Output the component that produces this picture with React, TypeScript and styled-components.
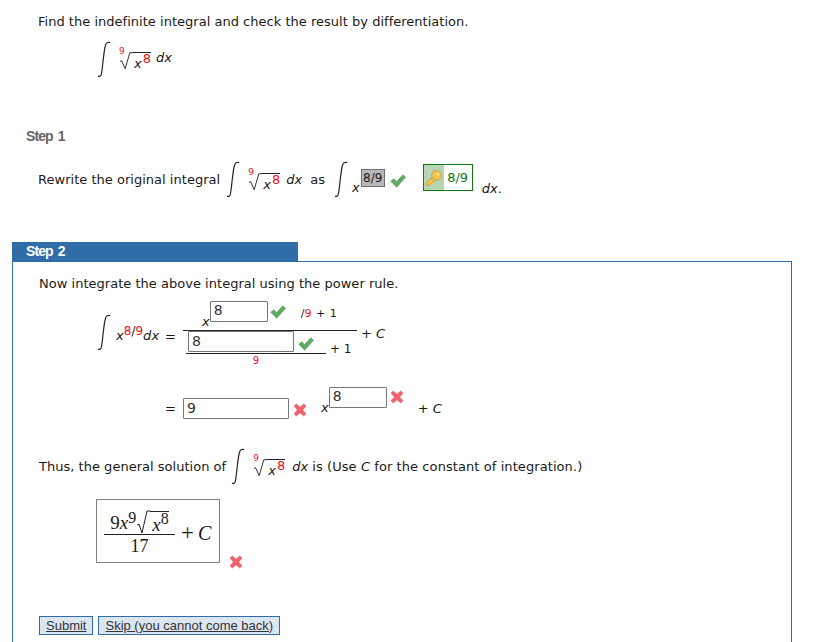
import styled, { createGlobalStyle } from 'styled-components';

const GlobalStyle = createGlobalStyle`
  html, body {
    margin: 0;
    padding: 0;
    background: #fff;
    overflow: hidden;
  }
  body {
    font-family: "DejaVu Sans", Verdana, sans-serif;
    font-size: 13px;
    letter-spacing: 0.02px;
    color: #1a1a1a;
  }
`;

const Page = styled.div`
  width: 837px;
  height: 642px;
  overflow: hidden;
  padding-top: 14px;
  box-sizing: border-box;
`;

const Question = styled.div`
  padding-left: 38px;
  height: 114px;
`;

const TextLine = styled.div`
  line-height: 16px;
  white-space: nowrap;
`;

const MathRow = styled.div<{ $indent?: number; $top?: number; $height?: number }>`
  display: flex;
  align-items: center;
  white-space: nowrap;
  margin-left: ${p => p.$indent ?? 0}px;
  margin-top: ${p => p.$top ?? 0}px;
  height: ${p => p.$height ?? 40}px;
`;

const Var = styled.i`
  font-style: italic;
`;

const Red = styled.span`
  color: #f01020;
`;

const Sup = styled.span`
  font-size: 12px;
  position: relative;
  top: -5px;
`;

const IntegralSvg = styled.svg`
  flex: none;
  width: 16px;
  height: 39px;
`;

function Integral() {
  return (
    <IntegralSvg viewBox="0 0 16 38">
      <path
        d="M1 35.500c1.500 1 2.600.4 3.300-1.600C5.600 29 6.500 12 8.300 5.500 9 2.600 10.400 1.200 13.200 2"
        fill="none"
        stroke="#222"
        strokeWidth="1.2"
      />
    </IntegralSvg>
  );
}

const RadicalWrap = styled.span`
  display: inline-flex;
  align-items: flex-end;
  position: relative;
  height: 22px;
  margin-left: 6px;
`;

const RootIndex = styled.span`
  position: absolute;
  left: 0;
  top: -2px;
  font-size: 9px;
  line-height: 10px;
  color: #f01020;
`;

const RootSvg = styled.svg`
  width: 14px;
  height: 21px;
  flex: none;
`;

const Radicand = styled.span`
  border-top: 1px solid #222;
  height: 17px;
  line-height: 21px;
  padding: 0 0 0 1px;
`;

const SmallSup = styled.span`
  color: #f01020;
  position: relative;
  top: -5px;
  margin-left: 1px;
`;

function Radical() {
  return (
    <RadicalWrap>
      <RootIndex>9</RootIndex>
      <RootSvg viewBox="0 0 14 21">
        <path d="M1 12.500l1.600-.8 3.600 8 4.600-16h3.200" fill="none" stroke="#333" strokeWidth="1" />
      </RootSvg>
      <Radicand>
        <Var>x</Var>
        <SmallSup>8</SmallSup>
      </Radicand>
    </RadicalWrap>
  );
}

const Dx = styled.span<{ $left?: number; $raise?: number }>`
  margin-left: ${p => p.$left ?? 6}px;
  position: relative;
  top: ${p => -(p.$raise ?? 0)}px;
`;

const StepLabel = styled.div`
  font-family: "Liberation Sans", Arial, sans-serif;
  font-weight: bold;
  font-size: 14px;
  line-height: 16px;
  color: #666;
  padding-left: 26px;
  letter-spacing: -0.9px;
  word-spacing: 2px;
`;

const Step1Body = styled.div`
  height: 84px;
  padding-left: 38px;
`;

const Word = styled.span<{ $left?: number; $right?: number }>`
  margin-left: ${p => p.$left ?? 0}px;
  margin-right: ${p => p.$right ?? 0}px;
`;

const WideWord = styled(Word)`
  letter-spacing: 0.08px;
`;

const BaseX = styled.i<{ $drop?: number; $left?: number }>`
  font-style: italic;
  position: relative;
  top: ${p => p.$drop ?? 0}px;
  margin-left: ${p => p.$left ?? 0}px;
`;

const GreyAnswer = styled.span`
  display: inline-block;
  box-sizing: border-box;
  width: 24px;
  height: 18px;
  line-height: 16px;
  background: #b8b8b8;
  border: 1px solid #6f6f6f;
  font-size: 12px;
  text-align: center;
  position: relative;
  top: -2px;
  margin-left: 1px;
`;

const KeyBox = styled.span`
  display: inline-flex;
  box-sizing: border-box;
  width: 50px;
  height: 27px;
  border: 1px solid #117711;
  margin-left: 17px;
  position: relative;
  top: -2px;
`;

const KeyCell = styled.span`
  width: 20px;
  background: #b6d5b4;
  display: flex;
  align-items: center;
  justify-content: center;
`;

const KeyValue = styled.span`
  flex: 1;
  text-align: center;
  line-height: 25px;
  color: #117711;
`;

const DxEnd = styled.span`
  position: relative;
  top: 9px;
  margin-left: 9px;
`;

const Tick = styled.svg<{ $left?: number; $top?: number }>`
  flex: none;
  width: 16px;
  height: 14px;
  margin-left: ${p => p.$left ?? 5}px;
  position: relative;
  top: ${p => p.$top ?? 0}px;
`;

function Check({ left, top }: { left?: number; top?: number }) {
  return (
    <Tick viewBox="0 0 16 14" $left={left} $top={top}>
      <path d="M.8 7.200l3-2.400 2.800 2.700L12.800.8l2.800 2.400-8.900 10z" fill="#62ab62" stroke="#4f9a50" strokeWidth=".6" />
    </Tick>
  );
}

function Cross({ left, top }: { left?: number; top?: number }) {
  return (
    <Tick viewBox="0 0 16 14" $left={left} $top={top}>
      <path
        d="M2 3.200L4.300 1l3.700 3.200L11.700 1 14 3.200 10.600 7l3.400 3.800-2.300 2.200L8 9.800 4.300 13 2 10.800 5.400 7z"
        fill="#f2606c"
        stroke="#e4505e"
        strokeWidth=".5"
      />
    </Tick>
  );
}

const StepHeader = styled.div`
  margin-left: 12px;
  width: 286px;
  height: 19px;
  line-height: 19px;
  box-sizing: border-box;
  padding-left: 14px;
  background: #2f6ca8;
  color: #fff;
  font-family: "Liberation Sans", Arial, sans-serif;
  font-weight: bold;
  font-size: 14px;
  letter-spacing: -0.9px;
  word-spacing: 2px;
`;

const Panel = styled.div`
  margin-left: 12px;
  width: 780px;
  height: 400px;
  box-sizing: border-box;
  border: 1px solid #2f6ca8;
  padding: 14px 0 0 26px;
`;

const Box = styled.input<{ $w: number }>`
  flex: none;
  box-sizing: border-box;
  width: ${p => p.$w}px;
  height: 21px;
  border: 1px solid #767676;
  border-radius: 1px;
  padding: 0 0 2px 3px;
  margin: 0;
  font-family: "DejaVu Sans", Verdana, sans-serif;
  font-size: 14px;
  color: #333;
  background: #fff;
  outline: none;
`;

const FracRow = styled.div`
  display: flex;
  align-items: center;
  margin: 4px 0 0 58px;
  height: 68px;
`;

const IntegralExpr = styled.div`
  display: flex;
  align-items: center;
  width: 68px;
  margin-top: 4px;
`;

const RaisedText = styled.span`
  margin-left: 3px;
  position: relative;
  top: 3px;
  white-space: nowrap;
`;

const EqualSign = styled.span<{ $drop?: number }>`
  margin-right: 7px;
  position: relative;
  top: ${p => p.$drop ?? 0}px;
`;

const BigFrac = styled.div`
  width: 174px;
  flex: none;
  display: flex;
  flex-direction: column;
  margin-top: 8px;
`;

const Numerator = styled.div`
  display: flex;
  align-items: flex-start;
  height: 29px;
  padding-left: 19px;
  border-bottom: 1.5px solid #222;
  box-sizing: content-box;
`;

const NumeratorTail = styled.span`
  font-size: 11px;
  margin: 6px 0 0 15px;
  word-spacing: 1px;
`;

const InnerFrac = styled.div`
  display: flex;
  align-items: flex-end;
`;

const InnerBody = styled.div`
  width: 140px;
  margin-left: 3px;
`;

const InnerTop = styled.div`
  display: flex;
  align-items: center;
  height: 22px;
  padding-left: 2px;
  border-bottom: 1.5px solid #222;
`;

const InnerBottom = styled.div`
  text-align: center;
  color: #f01020;
  font-size: 10px;
  line-height: 14px;
`;

const PlusOne = styled.span`
  font-size: 12px;
  margin: 0 0 12px 4px;
  white-space: nowrap;
`;

const PlusC = styled.span`
  margin-left: 4px;
  margin-top: 6px;
  white-space: nowrap;
`;

const ResultRow = styled.div`
  display: flex;
  align-items: center;
  margin: 34px 0 0 126px;
  height: 21px;
`;

const RaisedBase = styled.div`
  display: flex;
  margin-left: 13px;
  position: relative;
  top: -8px;
`;

const BaseBelow = styled.i`
  font-style: italic;
  margin-top: 13px;
`;

const TailC = styled.span`
  margin-left: 13px;
  white-space: nowrap;
`;

const ThusRow = styled(MathRow)`
  margin-top: 27px;
`;

const AnswerRow = styled.div`
  display: flex;
  margin: 13px 0 0 57px;
`;

const AnswerBox = styled.div`
  box-sizing: border-box;
  width: 124px;
  height: 64px;
  border: 1px solid #7f7f7f;
  display: flex;
  align-items: center;
  padding-left: 7px;
  font-family: "Liberation Serif", "Times New Roman", serif;
  font-size: 19px;
  letter-spacing: 0;
`;

const TypesetFrac = styled.div`
  width: 71px;
  text-align: center;
`;

const TypesetTop = styled.div`
  display: flex;
  justify-content: center;
  align-items: flex-end;
  height: 28px;
  border-bottom: 1px solid #222;
`;

const TypesetSup = styled.span`
  font-size: 16px;
  position: relative;
  top: -7px;
`;

const TypesetRoot = styled.span`
  display: inline-flex;
  align-items: flex-end;
`;

const TypesetRootSvg = styled.svg`
  width: 14px;
  height: 24px;
  flex: none;
`;

const TypesetRadicand = styled.span`
  border-top: 1px solid #222;
  height: 22px;
  line-height: 26px;
  padding-left: 2px;
`;

const TypesetBottom = styled.div`
  line-height: 22px;
  font-size: 18px;
`;

const PlusConstant = styled.span`
  margin: 3px 0 0 6px;
  font-size: 23px;
  line-height: 24px;
  white-space: nowrap;
`;

const ConstantName = styled.i`
  font-size: 20px;
  margin-left: 4px;
`;

const ActionRow = styled.div`
  display: flex;
  gap: 5px;
  margin-top: 53px;
`;

const ActionButton = styled.button`
  box-sizing: border-box;
  height: 19px;
  padding: 0 6px;
  border: 1px solid #2f6ca8;
  background: #dce6f1;
  color: #333;
  font-family: "Liberation Sans", Arial, sans-serif;
  font-size: 13px;
  line-height: 16px;
  text-decoration: underline;
`;

export default function App() {
  return (
    <>
      <GlobalStyle />
      <Page>
        <Question>
          <TextLine>Find the indefinite integral and check the result by differentiation.</TextLine>
          <MathRow $indent={59} $top={9}>
            <Integral />
            <Radical />
            <Dx $left={5} $raise={2}>
              <Var>dx</Var>
            </Dx>
          </MathRow>
        </Question>
        <StepLabel>Step 1</StepLabel>
        <Step1Body>
          <MathRow $top={14} $height={43}>
            <Word $right={6}>Rewrite the original integral</Word>
            <Integral />
            <Radical />
            <Dx>
              <Var>dx</Var>
            </Dx>
            <Word $left={8} $right={9}>as</Word>
            <Integral />
            <BaseX $drop={8} $left={2}>x</BaseX>
            <GreyAnswer>8/9</GreyAnswer>
            <Check left={5} top={1} />
            <KeyBox>
              <KeyCell>
                <svg width="18" height="18" viewBox="0 0 18 18">
                  <path d="M9 9L3 15" stroke="#c9952f" strokeWidth="4.200" strokeLinecap="round" />
                  <path d="M9 9L3 15M6 12l2 2" stroke="#f3c552" strokeWidth="2.800" strokeLinecap="round" />
                  <circle cx="11.500" cy="6.500" r="4.800" fill="#f3c552" stroke="#c9952f" strokeWidth=".8" />
                  <circle cx="12.800" cy="5.200" r="1.100" fill="#fff3c0" />
                </svg>
              </KeyCell>
              <KeyValue>8/9</KeyValue>
            </KeyBox>
            <DxEnd>
              <Var>dx</Var>.
            </DxEnd>
          </MathRow>
        </Step1Body>
        <StepHeader>Step 2</StepHeader>
        <Panel>
          <TextLine>Now integrate the above integral using the power rule.</TextLine>
          <FracRow>
            <IntegralExpr>
              <Integral />
              <RaisedText>
                <Var>x</Var>
                <Sup>
                  <Red>8</Red>/<Red>9</Red>
                </Sup>
                <Var>dx</Var>
              </RaisedText>
            </IntegralExpr>
            <EqualSign $drop={6}>=</EqualSign>
            <BigFrac>
              <Numerator>
                <BaseBelow>x</BaseBelow>
                <Box $w={58} value="8" readOnly />
                <Check left={2} top={4} />
                <NumeratorTail>
                  /<Red>9</Red> + 1
                </NumeratorTail>
              </Numerator>
              <InnerFrac>
                <InnerBody>
                  <InnerTop>
                    <Box $w={106} value="8" readOnly />
                    <Check left={4} top={2} />
                  </InnerTop>
                  <InnerBottom>9</InnerBottom>
                </InnerBody>
                <PlusOne>+ 1</PlusOne>
              </InnerFrac>
            </BigFrac>
            <PlusC>
              + <Var>C</Var>
            </PlusC>
          </FracRow>
          <ResultRow>
            <EqualSign>=</EqualSign>
            <Box $w={106} value="9" readOnly />
            <Cross left={3} top={1} />
            <RaisedBase>
              <BaseBelow>x</BaseBelow>
              <Box $w={58} value="8" readOnly />
              <Cross left={2} top={3} />
            </RaisedBase>
            <TailC>
              + <Var>C</Var>
            </TailC>
          </ResultRow>
          <ThusRow $height={40}>
            <Word $right={5}>Thus, the general solution of</Word>
            <Integral />
            <Radical />
            <Dx $left={7}>
              <Var>dx</Var>
            </Dx>
            <WideWord $left={4}>
              is (Use <Var>C</Var> for the constant of integration.)
            </WideWord>
          </ThusRow>
          <AnswerRow>
            <AnswerBox>
              <TypesetFrac>
                <TypesetTop>
                  9<i>x</i>
                  <TypesetSup>9</TypesetSup>
                  <TypesetRoot>
                    <TypesetRootSvg viewBox="0 0 14 24">
                      <path d="M1 15l2-.8L6 23 11 1h3" fill="none" stroke="#222" strokeWidth="1" />
                    </TypesetRootSvg>
                    <TypesetRadicand>
                      <i>x</i>
                      <TypesetSup>8</TypesetSup>
                    </TypesetRadicand>
                  </TypesetRoot>
                </TypesetTop>
                <TypesetBottom>17</TypesetBottom>
              </TypesetFrac>
              <PlusConstant>
                +<ConstantName>C</ConstantName>
              </PlusConstant>
            </AnswerBox>
            <Cross left={8} top={56} />
          </AnswerRow>
          <ActionRow>
            <ActionButton>Submit</ActionButton>
            <ActionButton>Skip (you cannot come back)</ActionButton>
          </ActionRow>
        </Panel>
      </Page>
    </>
  );
}
